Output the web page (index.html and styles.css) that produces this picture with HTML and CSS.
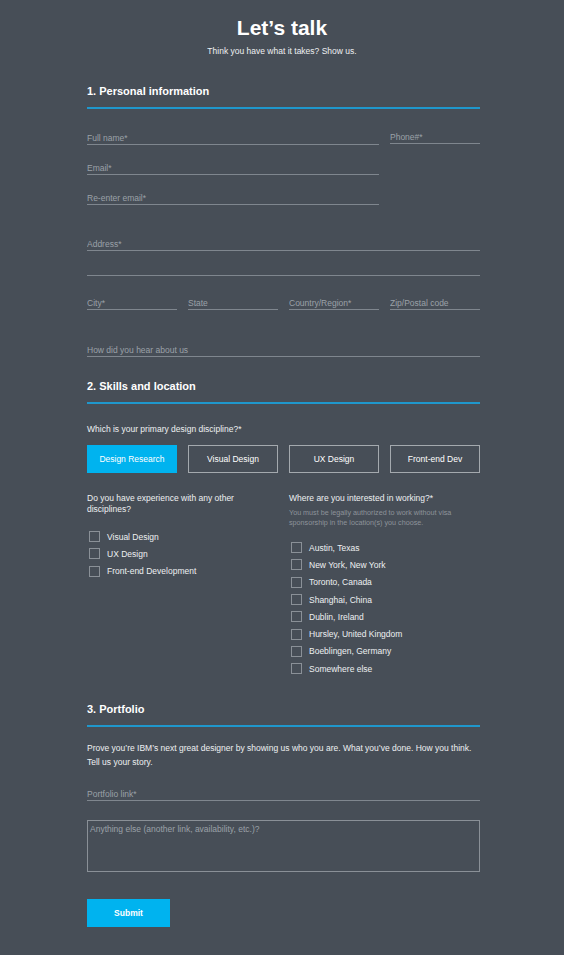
FILE: index.html
```html
<!DOCTYPE html>
<html lang="en">
<head>
  <meta charset="UTF-8" />
  <meta name="viewport" content="width=device-width, initial-scale=1.0">
  <title>Let's talk</title>
  <link rel="stylesheet" href="styles.css">
</head>
<body>
  <header class="intro">
    <h1>Let’s talk</h1>
    <p>Think you have what it takes? Show us.</p>
  </header>

  <form class="apply">
    <!-- 1. personal info -->
    <h2 class="section-title">1. Personal information</h2>

    <div class="row row-first">
      <input class="field wide" type="text" placeholder="Full name*">
      <input class="field narrow" type="text" placeholder="Phone#*">
    </div>
    <div class="row">
      <input class="field wide" type="email" placeholder="Email*">
    </div>
    <div class="row">
      <input class="field wide" type="email" placeholder="Re-enter email*">
    </div>
    <div class="row row-gap">
      <input class="field full" type="text" placeholder="Address*">
    </div>
    <div class="row row-tight">
      <input class="field full" type="text">
    </div>
    <div class="row row-mid quad">
      <input class="field" type="text" placeholder="City*">
      <input class="field" type="text" placeholder="State">
      <input class="field" type="text" placeholder="Country/Region*">
      <input class="field" type="text" placeholder="Zip/Postal code">
    </div>
    <div class="row row-far">
      <input class="field full" type="text" placeholder="How did you hear about us">
    </div>

    <!-- 2. skills -->
    <h2 class="section-title">2. Skills and location</h2>

    <p class="question">Which is your primary design discipline?*</p>
    <div class="choices">
      <button type="button" class="choice active">Design Research</button>
      <button type="button" class="choice">Visual Design</button>
      <button type="button" class="choice">UX Design</button>
      <button type="button" class="choice">Front-end Dev</button>
    </div>

    <div class="columns">
      <div class="col">
        <p class="col-title">Do you have experience with any other disciplines?</p>
        <ul class="checks checks-left">
          <li><span class="box"></span>Visual Design</li>
          <li><span class="box"></span>UX Design</li>
          <li><span class="box"></span>Front-end Development</li>
        </ul>
      </div>
      <div class="col">
        <p class="col-title">Where are you interested in working?*</p>
        <p class="hint">You must be legally authorized to work without visa sponsorship in the location(s) you choose.</p>
        <ul class="checks">
          <li><span class="box"></span>Austin, Texas</li>
          <li><span class="box"></span>New York, New York</li>
          <li><span class="box"></span>Toronto, Canada</li>
          <li><span class="box"></span>Shanghai, China</li>
          <li><span class="box"></span>Dublin, Ireland</li>
          <li><span class="box"></span>Hursley, United Kingdom</li>
          <li><span class="box"></span>Boeblingen, Germany</li>
          <li><span class="box"></span>Somewhere else</li>
        </ul>
      </div>
    </div>

    <!-- 3. portfolio -->
    <h2 class="section-title">3. Portfolio</h2>

    <p class="pitch">Prove you’re IBM’s next great designer by showing us who you are. What you’ve done. How you think. Tell us your story.</p>

    <div class="row row-link">
      <input class="field full" type="url" placeholder="Portfolio link*">
    </div>

    <textarea class="notes" placeholder="Anything else (another link, availability, etc.)?"></textarea>

    <button type="submit" class="submit">Submit</button>
  </form>
</body>
</html>
```

FILE: styles.css
```css
body {
  margin: 0;
  background: #474e57;
  color: #eef0f2;
  font-family: "Liberation Sans", Arial, sans-serif;
}
.intro {
  text-align: center;
  padding-top: 15px;
}
.intro h1 {
  margin: 0;
  font-size: 21px;
  line-height: 26px;
  font-weight: bold;
  color: #fff;
}
.intro p {
  margin: 4px 0 0;
  font-size: 8.5px;
  line-height: 12px;
}
.apply {
  width: 393px;
  margin-left: 87px;
  padding-bottom: 29px;
}
.section-title {
  margin: 27px 0 0;
  font-size: 11px;
  line-height: 14px;
  font-weight: bold;
  color: #fff;
  padding-bottom: 9px;
  border-bottom: 2px solid #1f97cc;
}
.row {
  display: flex;
  gap: 11px;
  margin-top: 17px;
}
.row-first { margin-top: 23px; }
.row-gap { margin-top: 33px; }
.row-tight { margin-top: 12px; }
.row-mid { margin-top: 21px; }
.row-far { margin-top: 34px; }
.row-link { margin-top: 19px; }
.field {
  box-sizing: border-box;
  height: 13px;
  padding: 0;
  border: none;
  border-bottom: 1px solid #7f868e;
  background: transparent;
  color: #fff;
  font-family: inherit;
  font-size: 8.5px;
  line-height: 12px;
  outline: none;
}
.field::placeholder { color: #9ba1a8; }
.wide { width: 292px; }
.narrow { width: 90px; align-self: flex-start; margin-top: -1px; }
.full { width: 393px; }
.quad .field { width: 90px; }
.section-title:nth-of-type(2) { margin-top: 22px; }
.question {
  margin: 19px 0 0;
  font-size: 8.5px;
  line-height: 12px;
}
.choices {
  display: flex;
  gap: 11px;
  margin-top: 10px;
}
.choice {
  box-sizing: border-box;
  width: 90px;
  height: 28px;
  background: transparent;
  border: 1px solid #a4a9ae;
  color: #fff;
  font-family: inherit;
  font-size: 8.5px;
  padding: 0;
}
.choice.active {
  background: #00b3ef;
  border-color: #00b3ef;
}
.columns {
  display: flex;
  gap: 22px;
  margin-top: 20px;
}
.col { width: 180px; }
.col + .col { width: 191px; }
.col-title {
  margin: 0;
  font-size: 8.5px;
  line-height: 11px;
  width: 172px;
}
.hint {
  margin: 4px 0 0;
  font-size: 7.2px;
  line-height: 10px;
  color: #8d939a;
}
.checks {
  list-style: none;
  margin: 11px 0 0;
  padding: 0;
}
.checks-left { margin-top: 13px; }
.checks li {
  display: flex;
  align-items: center;
  height: 17.3px;
  font-size: 8.5px;
}
.box {
  box-sizing: border-box;
  width: 11px;
  height: 11px;
  margin: 0 7px 0 2px;
  border: 1px solid #8a9097;
}
.section-title:nth-of-type(3) { margin-top: 25px; }
.pitch {
  margin: 14px 0 0;
  font-size: 8.5px;
  line-height: 14px;
}
.notes {
  display: block;
  box-sizing: border-box;
  width: 393px;
  height: 52px;
  margin-top: 19px;
  padding: 3px 2px;
  background: transparent;
  border: 1px solid #8a9097;
  color: #fff;
  font-family: inherit;
  font-size: 8.5px;
  resize: none;
  outline: none;
}
.notes::placeholder { color: #9ba1a8; }
.submit {
  display: block;
  width: 83px;
  height: 28px;
  margin-top: 27px;
  background: #00b3ef;
  border: none;
  color: #fff;
  font-family: inherit;
  font-size: 8.5px;
  font-weight: bold;
}
```
